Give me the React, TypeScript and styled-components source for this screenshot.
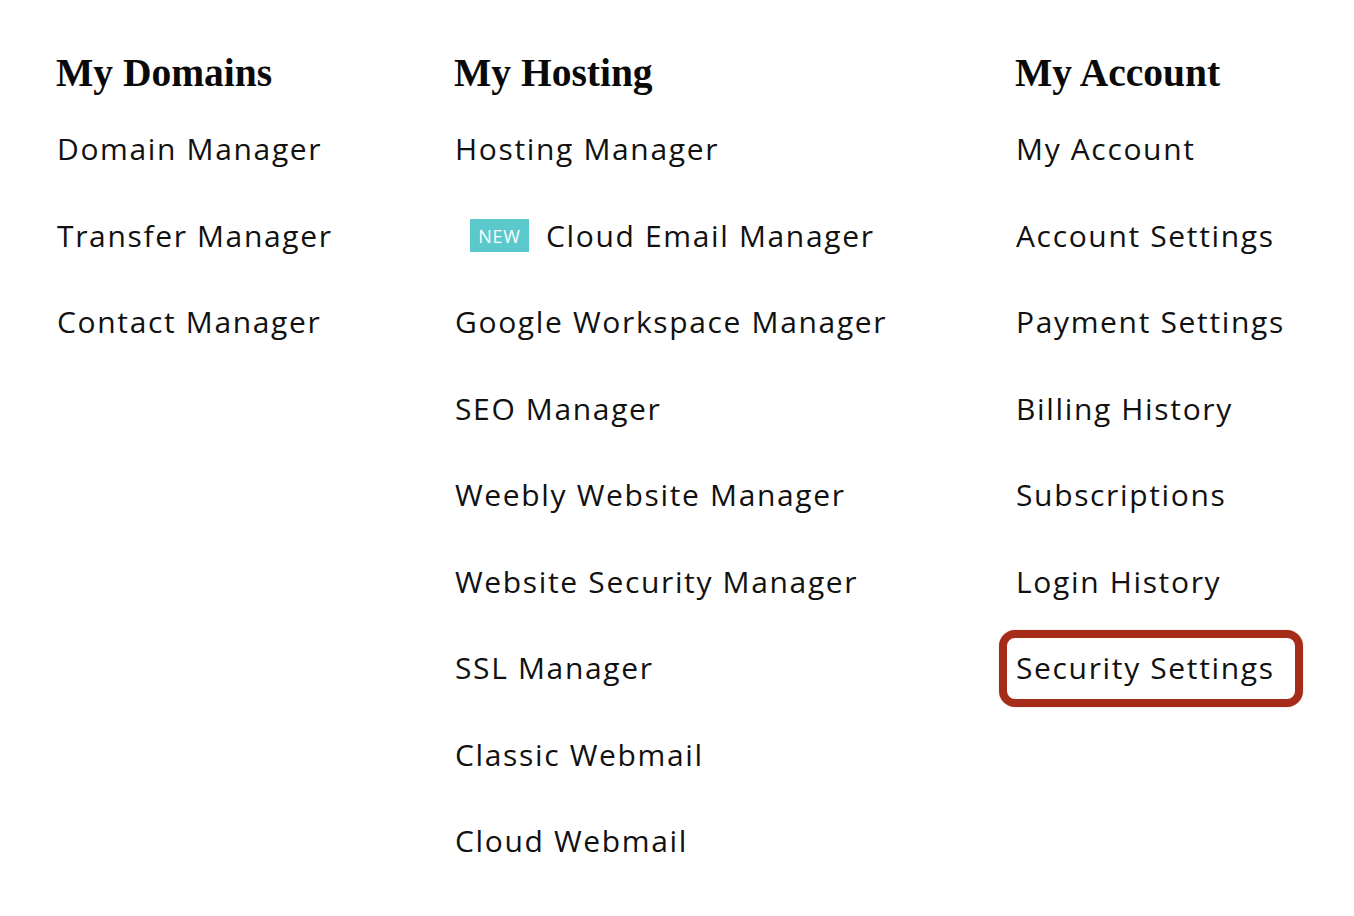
import React from "react";
import styled, { createGlobalStyle } from "styled-components";

const Global = createGlobalStyle`
  html, body { margin: 0; padding: 0; background: #ffffff; }
  body { font-family: "Open Sans", "Liberation Sans", sans-serif; color: #111111; }
`;

const Page = styled.div`
  display: grid;
  grid-template-columns: 398px 561px 1fr;
  padding: 53px 0 0 57px;
`;

const Column = styled.section`
  display: flex;
  flex-direction: column;
`;

const Heading = styled.h2`
  margin: 0 0 13px -1px;
  height: 40px;
  line-height: 40px;
  font-family: "Liberation Serif", "DejaVu Serif", serif;
  font-weight: 700;
  font-size: 39.5px;
  color: #0a0a0a;
  letter-spacing: 0;
`;

const List = styled.ul`
  list-style: none;
  margin: 0;
  padding: 0;
`;

const Item = styled.li`
  height: 86.5px;
  display: flex;
  align-items: center;
`;

const Link = styled.a<{ $highlight?: boolean }>`
  position: relative;
  font-size: 30px;
  letter-spacing: 1.65px;
  color: #111111;
  text-decoration: none;
  line-height: 40px;
  ${(p) =>
    p.$highlight &&
    `
    &::before {
      content: "";
      position: absolute;
      left: -17px;
      right: -28px;
      top: -18px;
      bottom: -19px;
      border: 8px solid #a62c1a;
      border-radius: 16px;
      box-shadow: 0 0 1px 0 #d0683a;
    }
  `}
`;

const Badge = styled.span`
  display: inline-flex;
  align-items: center;
  justify-content: center;
  width: 59px;
  height: 33px;
  margin: 0 17px 0 15px;
  background: #5bc8cb;
  color: #ffffff;
  font-size: 18px;
  letter-spacing: 0.8px;
`;

type Entry = { label: string; isNew?: boolean; highlight?: boolean };

const columns: { title: string; items: Entry[] }[] = [
  {
    title: "My Domains",
    items: [
      { label: "Domain Manager" },
      { label: "Transfer Manager" },
      { label: "Contact Manager" },
    ],
  },
  {
    title: "My Hosting",
    items: [
      { label: "Hosting Manager" },
      { label: "Cloud Email Manager", isNew: true },
      { label: "Google Workspace Manager" },
      { label: "SEO Manager" },
      { label: "Weebly Website Manager" },
      { label: "Website Security Manager" },
      { label: "SSL Manager" },
      { label: "Classic Webmail" },
      { label: "Cloud Webmail" },
    ],
  },
  {
    title: "My Account",
    items: [
      { label: "My Account" },
      { label: "Account Settings" },
      { label: "Payment Settings" },
      { label: "Billing History" },
      { label: "Subscriptions" },
      { label: "Login History" },
      { label: "Security Settings", highlight: true },
    ],
  },
];

export default function App() {
  return (
    <>
      <Global />
      <Page>
        {columns.map((col) => (
          <Column key={col.title}>
            <Heading>{col.title}</Heading>
            <List>
              {col.items.map((it) => (
                <Item key={it.label}>
                  {it.isNew && <Badge>NEW</Badge>}
                  <Link href="#" $highlight={it.highlight}>
                    {it.label}
                  </Link>
                </Item>
              ))}
            </List>
          </Column>
        ))}
      </Page>
    </>
  );
}
